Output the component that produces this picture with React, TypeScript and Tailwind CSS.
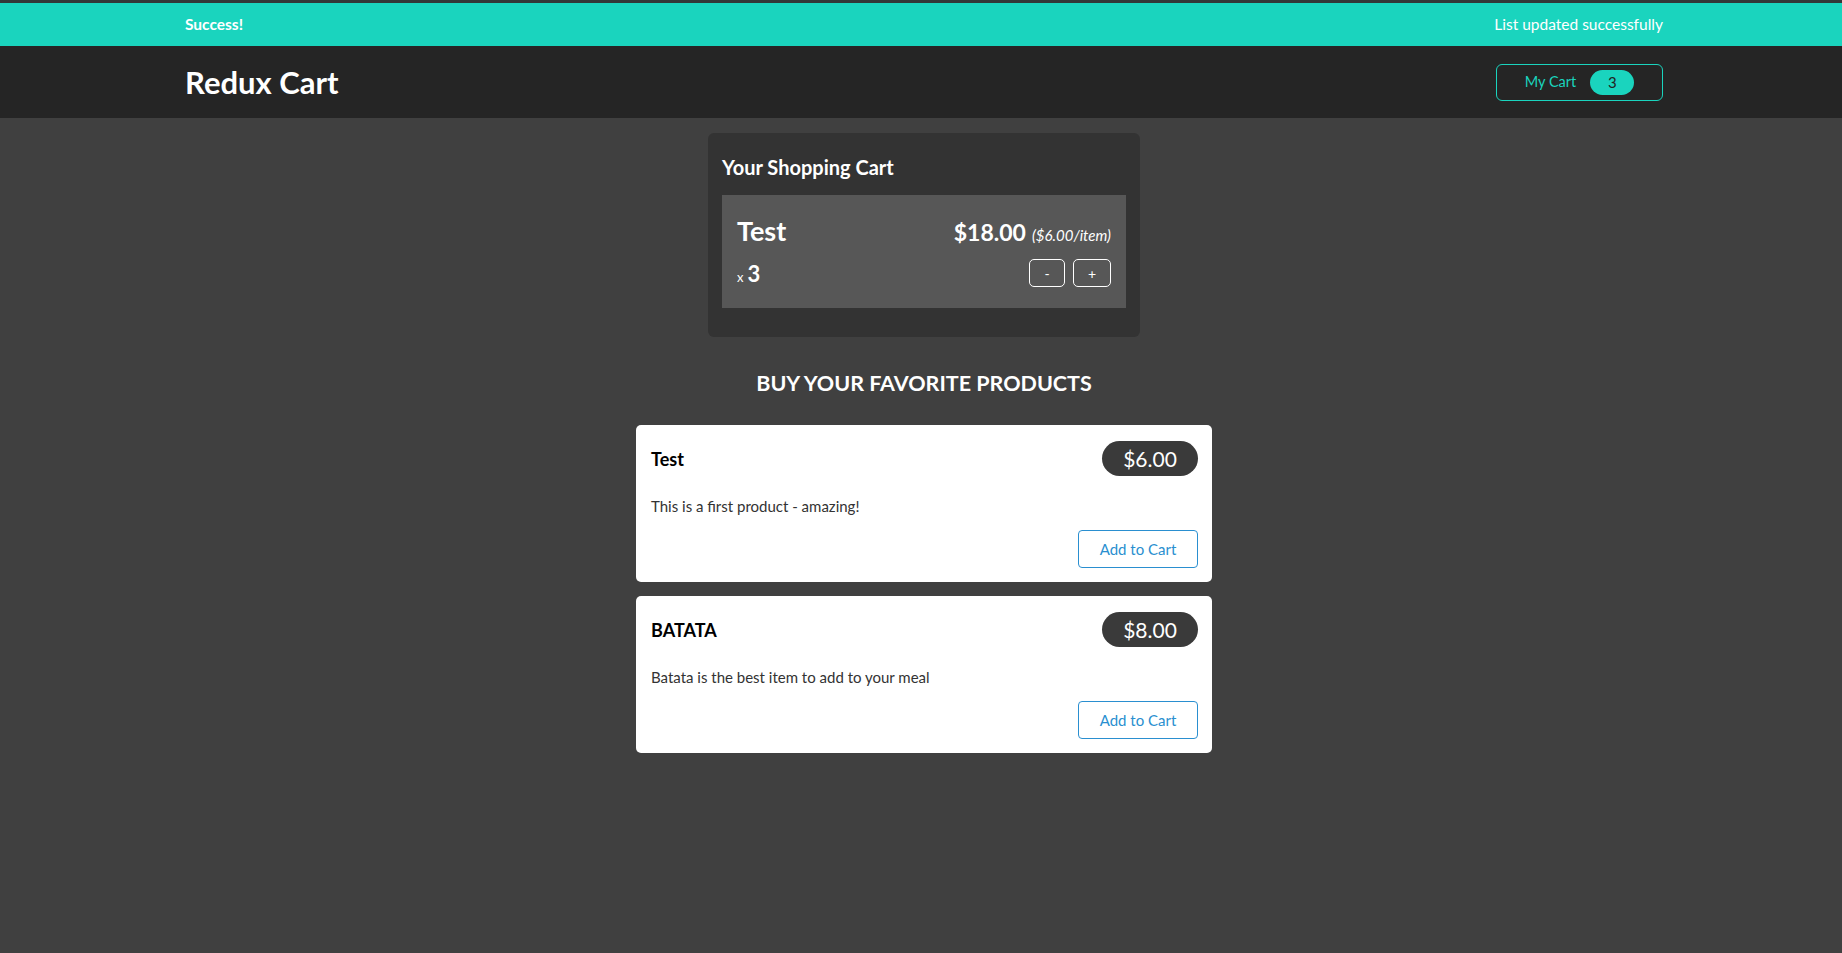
import React from "react";

const products = [
  { id: 1, title: "Test", price: 6, description: "This is a first product - amazing!" },
  { id: 2, title: "BATATA", price: 8, description: "Batata is the best item to add to your meal" },
];

function ProductCard({ title, price, description }: { title: string; price: number; description: string }) {
  return (
    <li className="w-[576px] bg-white rounded-[5px] pl-[15px] pr-[14px] pt-[16px] pb-[14px]">
      <div className="flex items-center justify-between h-[35px]">
        <h3 className="text-[18px] font-bold text-black leading-none">{title}</h3>
        <div className="w-[96px] h-[35px] rounded-full bg-[#3a3a3a] text-white text-[21px] flex items-center justify-center">
          ${price.toFixed(2)}
        </div>
      </div>
      <p className="mt-[18px] text-[15px] leading-[24px] text-[#333]">{description}</p>
      <div className="mt-[12px] flex justify-end">
        <button className="w-[120px] h-[38px] border border-[#2a8fd0] rounded-[4px] text-[#2a8fd0] text-[15px] bg-white">
          Add to Cart
        </button>
      </div>
    </li>
  );
}

export default function App() {
  return (
    <div className="min-h-screen bg-[#404040] font-['Lato',sans-serif]">
      <div className="h-[3px] bg-[#323838]" />
      <div className="h-[43px] bg-[#1ad4be]">
        <div className="h-full pl-[185px] pr-[179px] flex items-center justify-between text-white text-[15.5px]">
          <span className="font-bold">Success!</span>
          <span>List updated successfully</span>
        </div>
      </div>
      <header className="h-[72px] bg-[#252525]">
        <div className="h-full pl-[185px] pr-[179px] flex items-center justify-between">
          <h1 className="text-[31px] font-bold text-white">Redux Cart</h1>
          <button className="w-[167px] h-[37px] border border-[#1ad4be] rounded-[6px] flex items-center justify-center gap-[14px] text-[#1ad4be] text-[14.5px]">
            <span>My Cart</span>
            <span className="w-[44px] h-[25px] rounded-full bg-[#1ad4be] text-[#222] text-[15px] flex items-center justify-center">3</span>
          </button>
        </div>
      </header>
      <main className="flex flex-col items-center pt-[15px] pl-[6px] pb-10">
        <section className="w-[432px] bg-[#333333] rounded-[6px] px-[14px] pt-[22px] pb-[29px]">
          <h2 className="text-[20px] font-bold text-white leading-[24px]">Your Shopping Cart</h2>
          <ul className="mt-[16px]">
            <li className="bg-[#575757] px-[15px] pt-[16px] pb-[21px] text-white">
              <div className="flex items-baseline justify-between h-[34px]">
                <h3 className="text-[27px] font-bold">Test</h3>
                <div className="flex items-baseline gap-[6px]">
                  <span className="text-[23px] font-bold">$18.00</span>
                  <span className="text-[15px] italic">($6.00/item)</span>
                </div>
              </div>
              <div className="mt-[14px] flex items-center justify-between h-[28px]">
                <div className="flex items-baseline gap-[4px]">
                  <span className="text-[13px]">x</span>
                  <span className="text-[22px] font-bold">3</span>
                </div>
                <div className="flex gap-[8px]">
                  <button className="w-[36px] h-[28px] border border-white rounded-[5px] text-[14px] text-white">-</button>
                  <button className="w-[38px] h-[28px] border border-white rounded-[5px] text-[14px] text-white">+</button>
                </div>
              </div>
            </li>
          </ul>
        </section>
        <h2 className="mt-[33px] text-[21.5px] font-bold text-white leading-[26px]">BUY YOUR FAVORITE PRODUCTS</h2>
        <ul className="mt-[29px] flex flex-col gap-[14px]">
          {products.map((p) => (
            <ProductCard key={p.id} title={p.title} price={p.price} description={p.description} />
          ))}
        </ul>
      </main>
    </div>
  );
}
